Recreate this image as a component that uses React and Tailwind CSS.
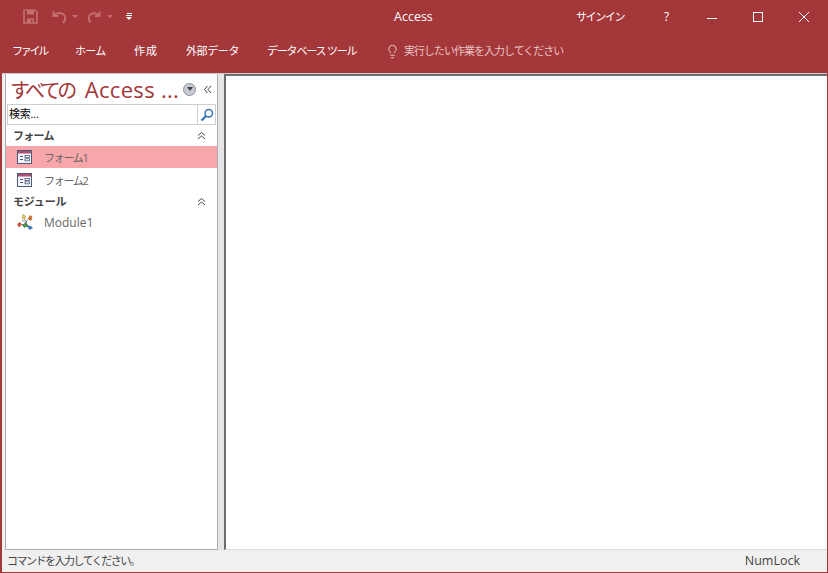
import React from 'react';
import { Lightbulb } from 'lucide-react';

const jp = { fontFamily: '"Open Sans", "Noto Sans CJK JP", sans-serif' };

const tabs = [
  { label: 'ファイル', cls: 'w-[35px] tracking-[-2.25px]' },
  { label: 'ホーム', cls: 'w-[31px] tracking-[-0.7px]' },
  { label: '作成', cls: 'w-[24px] tracking-[1px]' },
  { label: '外部データ', cls: 'w-[53px] tracking-[-0.4px]' },
  { label: 'データベース ツール', cls: 'w-[91px] tracking-[-1.2px]' },
];

const FormIcon = () => (
  <svg width="16" height="14" viewBox="0 0 16 14" className="shrink-0">
    <rect x="0.5" y="0.5" width="14" height="13" fill="#f4f6fb" stroke="#4a5a7c" />
    <rect x="1" y="1" width="13" height="2.5" fill="#b0506e" />
    <path d="M3 6.5h3M3 9.5h3" stroke="#4a5a7c" />
    <rect x="8" y="5.5" width="4.5" height="2" fill="#fff" stroke="#4a5a7c" strokeWidth="0.8" />
    <rect x="8" y="8.8" width="4.5" height="2" fill="#fff" stroke="#4a5a7c" strokeWidth="0.8" />
  </svg>
);

const ModuleIcon = () => (
  <svg width="16" height="16" viewBox="0 0 16 16" className="shrink-0">
    <path d="M7 4l4 8M12 4L6 12M3 10l9 3M5 6l6 5" stroke="#333" strokeWidth="1" strokeDasharray="1 1" fill="none" />
    <path d="M6 0.5l2.5 1.5-1 3.5-2.5-1.5z" fill="#e6cf6a" stroke="#a3913c" strokeWidth="0.6" />
    <path d="M13 1.5l2 1.5-1 3.5-2.5-1.5z" fill="#e2702e" stroke="#a04a1c" strokeWidth="0.6" />
    <path d="M0.5 10l2.5-1.5 1.5 2-2.5 2.5z" fill="#d8553a" stroke="#983422" strokeWidth="0.6" />
    <path d="M5.5 11l3-1.5 2 2-3 2z" fill="#4d9a46" stroke="#2e6a2a" strokeWidth="0.6" />
    <path d="M10.5 12.5l3-.5 2 2-3 1.5z" fill="#3f7fd0" stroke="#275a9c" strokeWidth="0.6" />
  </svg>
);

const Chevrons = ({ dir = 'up' }) => (
  <svg width="9" height="9" viewBox="0 0 9 9" className={dir === 'left' ? '-rotate-90' : ''}>
    <path d="M1 4.5L4.5 1.5 8 4.5M1 8L4.5 5 8 8" fill="none" stroke="#444" strokeWidth="1" />
  </svg>
);

const GroupHeader = ({ label, className, track }) => (
  <div className={`flex items-center justify-between pl-[7px] pr-[11px] ${className}`}>
    <span className={`pt-[2px] text-[11px] font-bold text-[#444] ${track}`}>{label}</span>
    <Chevrons />
  </div>
);

const NavItem = ({ icon, label, active, className, text }) => (
  <div className={`flex items-center pl-[11px] gap-[11px] text-[#666] ${active ? 'bg-[#f7a6aa]' : ''} ${className}`}>
    {icon}
    <span className={`pt-[2px] ${text}`}>{label}</span>
  </div>
);

export default function App() {
  return (
    <div className="w-[828px] h-[573px] flex flex-col bg-[#a4373a] overflow-hidden" style={jp}>
      {/* title bar */}
      <div className="h-[33px] shrink-0 flex items-center text-white">
        <div className="w-[140px] flex items-center pl-[23px] shrink-0">
          <svg width="15" height="15" viewBox="0 0 15 15">
            <path d="M1 1h11l2 2v11H1z" fill="none" stroke="#c47072" strokeWidth="1.6" />
            <path d="M4 1.5h7v4H4zM4 9.5h7V14H4z" fill="#c47072" />
            <rect x="8" y="11" width="1.5" height="2.5" fill="#a4373a" />
          </svg>
          <svg width="15" height="14" viewBox="0 0 15 14" className="ml-[14px]">
            <path d="M1.5 1v5h5M2 6c2-3 6-4 9-2 3 2 3 6 0 9" fill="none" stroke="#c47072" strokeWidth="2" />
          </svg>
          <span className="ml-[5px] w-0 h-0 border-x-[3px] border-x-transparent border-t-[3px] border-t-[#c47072]" />
          <svg width="14" height="14" viewBox="0 0 15 14" className="ml-[9px]">
            <path d="M13.5 1v5h-5M13 6c-2-3-6-4-9-2-3 2-3 6 0 9" fill="none" stroke="#c47072" strokeWidth="2" />
          </svg>
          <span className="ml-[6px] w-0 h-0 border-x-[3px] border-x-transparent border-t-[3px] border-t-[#c47072]" />
          <div className="ml-[13px] flex flex-col items-center gap-[1px]">
            <span className="w-[5px] h-[1px] bg-white" />
            <span className="w-[6px] h-[1px] bg-white" />
            <span className="w-0 h-0 border-x-[3px] border-x-transparent border-t-[3px] border-t-white" />
          </div>
        </div>
        <div className="w-[547px] shrink-0 pl-[254px] pt-[1px] text-[12.5px]">Access</div>
        <div className="flex-1 flex items-center">
          <span className="pt-[1px] text-[11px] tracking-[-1.4px] whitespace-nowrap -ml-[111px] w-[88px]">サインイン</span>
          <span className="text-[12px] w-[43px]">?</span>
          <svg width="10" height="10" viewBox="0 0 10 10" className="mr-[36px]">
            <path d="M0 6.5h10" stroke="#fff" />
          </svg>
          <svg width="10" height="10" viewBox="0 0 10 10" className="mr-[36px]">
            <rect x="0.5" y="0.5" width="9" height="9" fill="none" stroke="#fff" />
          </svg>
          <svg width="10" height="10" viewBox="0 0 10 10">
            <path d="M0 0l10 10M10 0L0 10" stroke="#fff" />
          </svg>
        </div>
      </div>

      {/* ribbon tabs */}
      <div className="h-[40px] shrink-0 flex items-start pt-[10px] pl-[12px] gap-[28px] text-[11px] text-white">
        {tabs.map((t) => (
          <div key={t.label} className={`${t.cls} whitespace-nowrap shrink-0`}>{t.label}</div>
        ))}
        <div className="flex items-center text-[#e9c3c4] -ml-[1px]">
          <Lightbulb size={15} strokeWidth={1.3} className="mr-[4px] text-[#f3dede]" />
          <span className="tracking-[-1px]">実行したい作業を入力してください</span>
        </div>
      </div>

      {/* body */}
      <div className="flex-1 min-h-0 ml-[2px] mr-[1px] bg-[#f0f0f0] flex flex-col">
        <div className="flex-1 min-h-0 flex border-t border-[#c9c9c9]">
          {/* nav pane */}
          <div className="w-[213px] shrink-0 ml-[3px] bg-white border-x border-b border-[#a9aeb8] flex flex-col">
            <div className="h-[30px] flex items-center">
              <span className="pl-[4px] w-[177px] flex items-baseline text-[#a4373a] text-[20px] whitespace-nowrap">
                <span className="tracking-[-3.5px]">すべての</span>
                <span className="ml-[11px] text-[22px] tracking-[0.3px]">Access ...</span>
              </span>
              <span className="w-[13px] h-[13px] rounded-full bg-[#c6cad2] border border-[#8d929c] flex items-center justify-center">
                <span className="w-0 h-0 border-x-[3px] border-x-transparent border-t-[4px] border-t-[#444]" />
              </span>
              <span className="ml-[7px]"><Chevrons dir="left" /></span>
            </div>
            <div className="h-[21px] mx-[1px] border border-[#cfcfcf] flex items-center justify-between">
              <span className="text-[11px] text-black pl-[1px] tracking-[-0.2px]">検索...</span>
              <div className="w-[18px] h-full border-l border-[#cfcfcf] flex items-center justify-center">
                <svg width="14" height="14" viewBox="0 0 14 14">
                  <circle cx="8.8" cy="5.2" r="3.7" fill="none" stroke="#3a78b5" strokeWidth="1.6" />
                  <path d="M6 8L1.5 12.5" stroke="#3a78b5" strokeWidth="2.4" />
                </svg>
              </div>
            </div>
            <GroupHeader label="フォーム" track="tracking-[-0.75px]" className="h-[21px]" />
            <NavItem icon={<FormIcon />} label="フォーム1" text="text-[11px] tracking-[-1.3px]" active className="h-[22px]" />
            <NavItem icon={<FormIcon />} label="フォーム2" text="text-[11px] tracking-[-1.3px]" className="h-[24px]" />
            <GroupHeader label="モジュール" track="tracking-[-0.2px]" className="h-[18px]" />
            <NavItem icon={<ModuleIcon />} label="Module1" text="text-[12px]" className="h-[24px]" />
          </div>

          {/* splitter */}
          <div className="w-[6px] shrink-0 bg-[#e6e6e6]" />

          {/* main area */}
          <div className="flex-1 bg-white border-l-2 border-t-2 border-[#6d6d6d] border-b border-b-[#dcdcdc]" />
        </div>

        {/* status bar */}
        <div className="h-[22px] shrink-0 flex items-center justify-between pl-[5px] pr-[27px] text-[#444]">
          <span className="text-[11px] tracking-[-1.5px]">コマンドを入力してください。</span>
          <span className="text-[12.5px]">NumLock</span>
        </div>
      </div>
      <div className="h-[1px] shrink-0" />
    </div>
  );
}
